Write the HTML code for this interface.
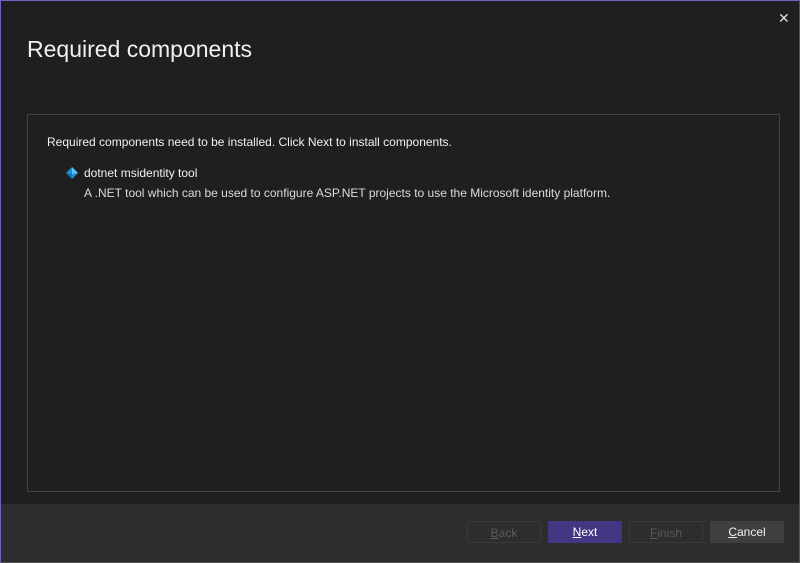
<!DOCTYPE html>
<html><head><style>
body{margin:0;width:800px;height:563px;overflow:hidden;background:#1f1f1f;font-family:"Liberation Sans",sans-serif;}
.win{position:absolute;left:0;top:0;width:798px;height:561px;border:1px solid #6e62c8;border-right-color:#555;border-bottom-color:#555;background:#1f1f1f;}
.title{position:absolute;left:27px;top:36px;font-size:23px;color:#f0f0f0;}
.close{position:absolute;left:778px;top:10px;color:#ddd;font-size:14px;}
.panel{position:absolute;left:27px;top:114px;width:751px;height:376px;border:1px solid #424242;}
.t{position:absolute;font-size:12px;color:#f1f1f1;white-space:nowrap;}
.foot{position:absolute;left:1px;top:504px;width:798px;height:58px;background:#2d2d2d;}
.b{position:absolute;top:521px;width:74px;height:22px;box-sizing:border-box;font-size:12px;text-align:center;line-height:22px;}
</style></head><body>
<div class="win"></div>
<div class="title">Required components</div>
<div class="close">✕</div>
<div class="panel"></div>
<div class="t" style="left:47px;top:135px">Required components need to be installed. Click Next to install components.</div>
<svg style="position:absolute;left:65px;top:166px" width="14" height="14" viewBox="0 0 14 14"><path d="M7 1L13 7L7 13L1 7Z" fill="#1e8fd6"/><path d="M7 1L13 7L7 8Z" fill="#5cc4f5"/><path d="M1 7L7 8L7 13Z" fill="#1570b0"/></svg>
<div class="t" style="left:84px;top:166px">dotnet msidentity tool</div>
<div class="t" style="left:84px;top:186px;color:#dcdcdc">A .NET tool which can be used to configure ASP.NET projects to use the Microsoft identity platform.</div>
<div class="foot"></div>
<div class="b" style="left:467px;border:1px solid #3a3a3a;color:#5a5a5a"><u>B</u>ack</div>
<div class="b" style="left:548px;background:#433784;color:#fff"><u>N</u>ext</div>
<div class="b" style="left:629px;border:1px solid #3a3a3a;color:#5a5a5a"><u>F</u>inish</div>
<div class="b" style="left:710px;background:#3f3f3f;color:#f1f1f1"><u>C</u>ancel</div>
</body></html>
